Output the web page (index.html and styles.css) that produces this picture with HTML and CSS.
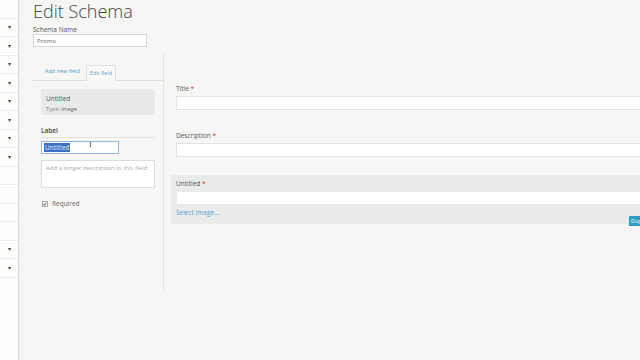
FILE: index.html
```html
<!DOCTYPE html>
<html lang="en">
<head>
    <meta charset="UTF-8">
    <title>Edit Schema</title>
    <link rel="stylesheet" href="styles.css">
</head>
<body>
    <nav class="sidebar">
        <div class="navRow"></div>
        <div class="navRow"><span class="caret">&#9662;</span></div>
        <div class="navRow"><span class="caret">&#9662;</span></div>
        <div class="navRow"><span class="caret">&#9662;</span></div>
        <div class="navRow"><span class="caret">&#9662;</span></div>
        <div class="navRow"><span class="caret">&#9662;</span></div>
        <div class="navRow"><span class="caret">&#9662;</span></div>
        <div class="navRow"><span class="caret">&#9662;</span></div>
        <div class="navRow"><span class="caret">&#9662;</span></div>
        <div class="navRow"></div>
        <div class="navRow"></div>
        <div class="navRow"></div>
        <div class="navRow"></div>
        <div class="navRow"><span class="caret">&#9662;</span></div>
        <div class="navRow"><span class="caret">&#9662;</span></div>
    </nav>
    <main class="main">
        <h1>Edit Schema</h1>
        <label class="smallLabel">Schema Name</label>
        <input type="text" class="schemaName" value="Promo">
        <div class="workspace">
            <div class="editor">
                <div class="tabs">
                    <span class="tab">Add new field</span>
                    <span class="tab active">Edit field</span>
                </div>
                <div class="fieldCard">
                    <div class="cardName">Untitled</div>
                    <div class="cardType">Type: <b>image</b></div>
                </div>
                <div class="labelHead">Label</div>
                <div class="labelInput"><span class="selected">Untitled</span><span class="cursor">I</span></div>
                <div class="descBox">Add a longer description to this field</div>
                <div class="required"><span class="check">&#10004;</span>Required</div>
            </div>
            <div class="preview">
                <div class="field">
                    <div class="fieldLabel">Title <span class="star">*</span></div>
                    <div class="fieldInput"></div>
                </div>
                <div class="field">
                    <div class="fieldLabel">Description <span class="star">*</span></div>
                    <div class="fieldInput"></div>
                </div>
                <div class="field imageField">
                    <div class="fieldLabel">Untitled <span class="star">*</span></div>
                    <div class="fieldInput"></div>
                    <a class="selectLink">Select image...</a>
                    <span class="dupBtn">Dup</span>
                </div>
            </div>
        </div>
    </main>
</body>
</html>
```

FILE: styles.css
```css
*{
    box-sizing: border-box;
    margin: 0;
    padding: 0;
}
html, body{
    height: 100%;
    overflow: hidden;
}
body{
    display: flex;
    font-family: 'Open Sans', sans-serif;
    background: #f6f7f5;
    color: #555;
    font-size: 7px;
}
.sidebar{
    width: 19px;
    flex-shrink: 0;
    background: #fdfdfd;
    border-right: 1px solid #dcdddc;
    box-shadow: 1px 0 0 #eceeec;
}
.navRow{
    height: 18.5px;
    border-bottom: 1px solid #ececec;
    display: flex;
    align-items: center;
    justify-content: flex-end;
    padding-right: 7px;
}
.caret{
    font-size: 6px;
    color: #444;
}
.main{
    flex: 1;
    padding-left: 14px;
    display: flex;
    flex-direction: column;
}
h1{
    font-weight: 300;
    font-size: 18px;
    color: #444;
    line-height: 22px;
}
.smallLabel{
    display: block;
    margin-top: 3px;
    font-size: 6.5px;
    color: #555;
}
.schemaName{
    width: 114px;
    height: 13px;
    border: 1px solid #d6d6d6;
    background: #fff;
    font-family: 'Open Sans', sans-serif;
    font-size: 6px;
    color: #666;
    padding-left: 3px;
    outline: none;
}
.workspace{
    display: flex;
    margin-top: 5px;
}
.editor{
    width: 131px;
    height: 238px;
    border-right: 1px solid #e3e4e3;
}
.tabs{
    display: flex;
    align-items: flex-end;
    height: 29px;
    padding-left: 9px;
    gap: 3px;
    border-bottom: 1px solid #dedfde;
}
.tab{
    padding: 0 3px;
    height: 16px;
    line-height: 15px;
    color: #5b95b8;
    font-size: 5.5px;
}
.tab.active{
    border: 1px solid #dedfde;
    border-bottom: none;
    background: #f8f9f8;
    color: #6a9fc0;
    position: relative;
    top: 1px;
}
.fieldCard{
    margin: 8px 8px 0 8px;
    height: 26px;
    background: #e8e9e8;
    padding: 5px 5px 0;
    line-height: 10px;
}
.cardName{
    font-size: 6.5px;
    color: #555;
}
.cardType{
    font-size: 5.5px;
    color: #888;
}
.cardType b{
    font-weight: 400;
    color: #666;
}
.labelHead{
    margin: 11px 8px 0 8px;
    font-weight: 600;
    font-size: 6.5px;
    color: #444;
    padding-bottom: 2px;
    border-bottom: 1px solid #e2e3e2;
}
.labelInput{
    margin: 3px 0 0 8px;
    width: 78px;
    height: 13px;
    background: #fff;
    border: 1px solid #8fb7d8;
    padding: 1px 2px;
    display: flex;
    align-items: center;
    position: relative;
}
.selected{
    background: #3b6fc9;
    color: #e8eef8;
    font-size: 6.5px;
    line-height: 9px;
    padding: 0 1px;
}
.cursor{
    position: absolute;
    left: 47px;
    top: -1px;
    font-size: 7px;
    color: #333;
    font-family: 'DejaVu Serif', serif;
}
.descBox{
    margin: 6px 8px 0 8px;
    height: 28px;
    background: #fff;
    border: 1px solid #dcdcdc;
    padding: 3px 4px;
    color: #aaa;
    font-size: 6px;
}
.required{
    margin: 11px 0 0 9px;
    display: flex;
    align-items: center;
    gap: 4px;
    font-size: 6.5px;
    color: #666;
}
.check{
    width: 6px;
    height: 6px;
    border: 1px solid #aaa;
    background: #fff;
    font-size: 5px;
    line-height: 5px;
    color: #333;
    text-align: center;
}
.preview{
    flex: 1;
    padding-top: 30px;
    margin-right: -2px;
}
.field{
    padding: 0 0 0 12px;
    height: 47px;
}
.fieldLabel{
    font-size: 6.5px;
    color: #555;
    line-height: 9px;
    padding-top: 2px;
}
.star{
    color: #c0392b;
}
.fieldInput{
    margin-top: 3px;
    height: 14px;
    background: #fff;
    border: 1px solid #e3e3e3;
    border-right: none;
}
.imageField{
    margin-left: 7px;
    margin-top: -1px;
    padding-left: 5px;
    padding-top: 2px;
    background: #e9ebea;
    height: 49px;
    position: relative;
}
.imageField .fieldInput{
    border-color: #e9ebea;
}
.selectLink{
    display: block;
    margin-top: 3px;
    font-size: 6.5px;
    color: #5b9ccb;
}
.dupBtn{
    position: absolute;
    right: 0;
    top: 41px;
    width: 13px;
    height: 10px;
    background: #2f9cc6;
    color: #fff;
    font-size: 5.5px;
    line-height: 10px;
    padding-left: 2px;
    overflow: hidden;
}
```
